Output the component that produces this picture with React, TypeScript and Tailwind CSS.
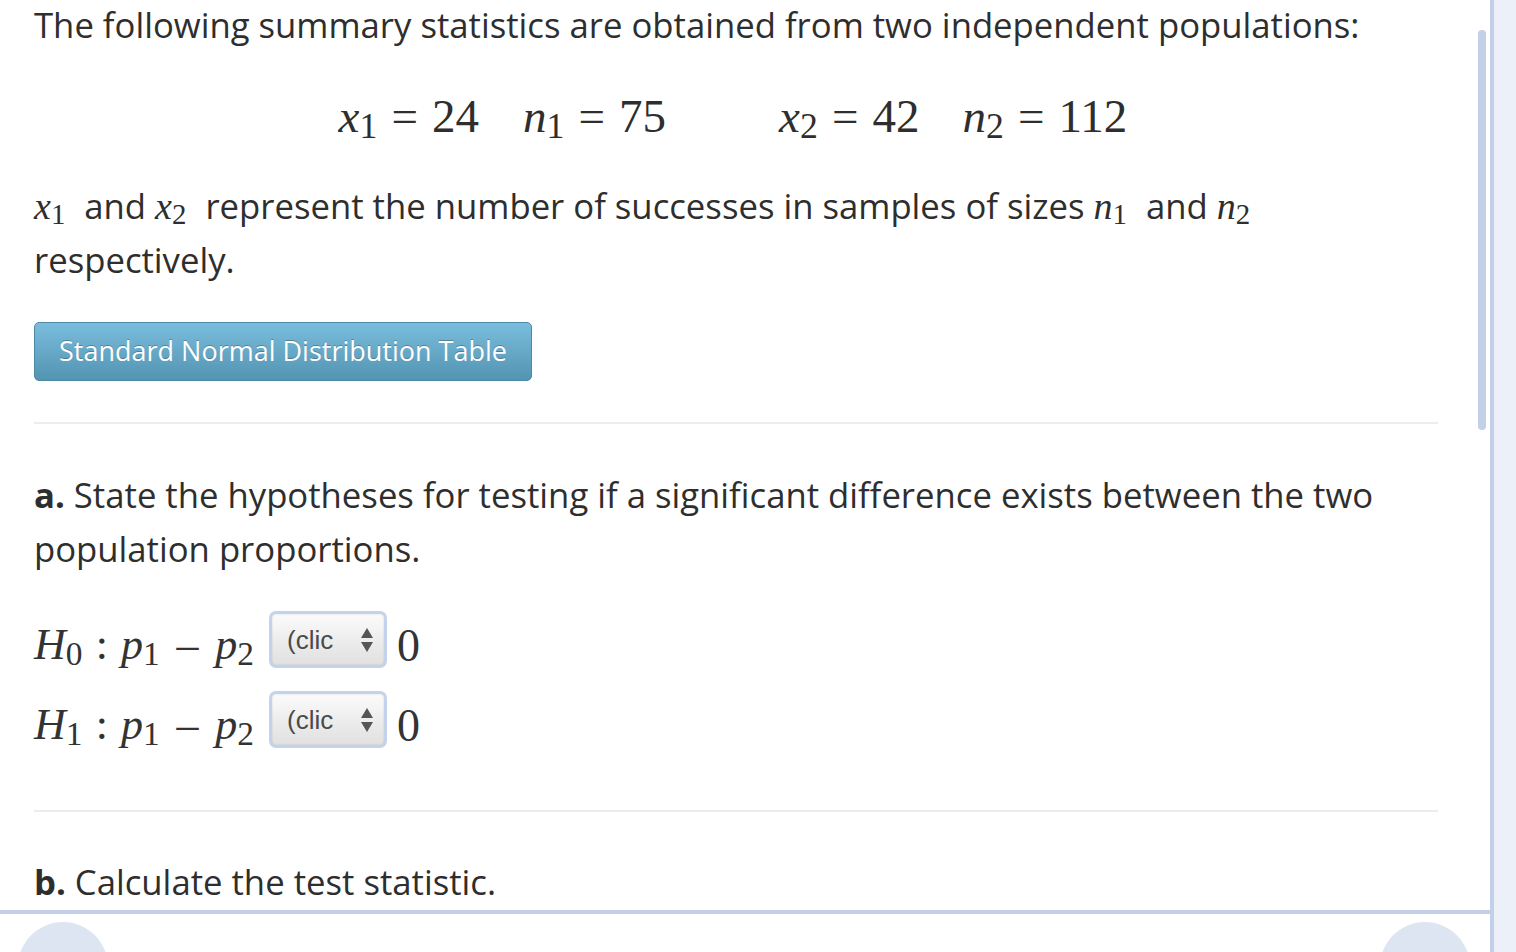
import React from "react";

const serif = "font-['Liberation_Serif','Times_New_Roman',serif]";

function Sub({ children }: { children: React.ReactNode }) {
  return (
    <span className="relative top-[0.17em] text-[0.76em] not-italic leading-none">{children}</span>
  );
}

function MVar({ v, s }: { v: string; s: string }) {
  return (
    <span className="leading-none">
      <i>{v}</i>
      <Sub>{s}</Sub>
    </span>
  );
}

function Eq({ v, s, n }: { v: string; s: string; n: string }) {
  return (
    <span className="whitespace-nowrap leading-none">
      <MVar v={v} s={s} />
      <span className="mx-[0.3em]">=</span>
      <span>{n}</span>
    </span>
  );
}

function Select() {
  return (
    <div className="h-[57px] w-[118px] rounded-[7px] border-[3px] border-[#c4d2ec] bg-[#c4d2ec]">
      <div className="flex h-full w-full items-center justify-between rounded-[4px] bg-gradient-to-b from-[#fbfbfb] to-[#e0e0e0] pl-[15px] pr-[10px] shadow-[inset_0_0_2px_rgba(0,0,0,0.15)]">
        <span className="font-['Liberation_Sans',Arial,sans-serif] text-[26px] leading-none text-[#4a4a4a]">(clic</span>
        <svg width="14" height="26" viewBox="0 0 14 26">
          <path d="M7 1 L13 11 L1 11 Z" fill="#555" />
          <path d="M7 25 L13 15 L1 15 Z" fill="#555" />
        </svg>
      </div>
    </div>
  );
}

function HRow({ h }: { h: string }) {
  return (
    <div className="flex h-[57px] items-start">
      <span className={`${serif} mt-[12px] whitespace-nowrap text-[44px] leading-none text-[#333]`}>
        <MVar v="H" s={h} />
        <span className="mx-[0.3em]">:</span>
        <MVar v="p" s="1" />
        <span className="mx-[0.38em]">–</span>
        <MVar v="p" s="2" />
      </span>
      <div className="ml-[15px]">
        <Select />
      </div>
      <span className={`${serif} ml-[10px] mt-[12px] text-[46px] leading-none text-[#333]`}>0</span>
    </div>
  );
}

function IM({ v, s }: { v: string; s: string }) {
  return (
    <span className={`${serif} pr-[10px] text-[38px] leading-none`}>
      <MVar v={v} s={s} />
    </span>
  );
}

export default function App() {
  return (
    <div className="flex h-[952px] w-[1516px] overflow-hidden bg-white font-['Open_Sans',sans-serif] text-[#2e2e2e]">
      <div className="flex w-[1490px] shrink-0 flex-col">
        <div className="relative h-[910px] shrink-0">
          <div className="w-[1438px] pl-[34px]">
            <p className="text-[34.7px] leading-[50px]">
              The following summary statistics are obtained from two independent populations:
            </p>
            <div className={`${serif} mt-[36px] flex h-[60px] items-center justify-center pr-[6px] text-[47px] leading-none`}>
              <Eq v="x" s="1" n="24" />
              <span className="ml-[44px]">
                <Eq v="n" s="1" n="75" />
              </span>
              <span className="ml-[113px]">
                <Eq v="x" s="2" n="42" />
              </span>
              <span className="ml-[43px]">
                <Eq v="n" s="2" n="112" />
              </span>
            </div>
            <p className="mt-[33px] text-[34.7px] leading-[54px]">
              <IM v="x" s="1" /> and <IM v="x" s="2" /> represent the number of successes in samples of sizes{" "}
              <IM v="n" s="1" /> and <IM v="n" s="2" />
              <br />
              respectively.
            </p>
            <button className="mt-[35px] flex h-[59px] w-[498px] items-center justify-center rounded-[5px] border border-[#4a89a8] bg-gradient-to-b from-[#7bbddc] to-[#5394b3] text-[27px] text-white [text-shadow:0_-1px_0_rgba(0,0,0,0.25)]">
              Standard Normal Distribution Table
            </button>
            <div className="mt-[41px] h-[2px] w-full bg-[#ededed]" />
            <p className="mt-[44px] text-[34.7px] leading-[54px]">
              <b>a.</b> State the hypotheses for testing if a significant difference exists between the two
              population proportions.
            </p>
            <div className="mt-[35px] flex flex-col gap-[23px]">
              <HRow h="0" />
              <HRow h="1" />
            </div>
            <div className="mt-[62px] h-[2px] w-full bg-[#ededed]" />
            <p className="mt-[43px] text-[34.7px] leading-[54px]">
              <b>b.</b> Calculate the test statistic.
            </p>
          </div>
          <div className="absolute right-[4px] top-[30px] h-[400px] w-[8px] rounded-full bg-[#c3d0e8]" />
        </div>
        <div className="h-[4px] shrink-0 bg-[#c3d0e8]" />
        <div className="flex shrink-0 justify-between pl-[18px] pr-[20px] pt-[8px]">
          <div className="h-[90px] w-[90px] shrink-0 rounded-full bg-[#dde4f2]" />
          <div className="h-[90px] w-[90px] shrink-0 rounded-full bg-[#dde4f2]" />
        </div>
      </div>
      <div className="w-[4px] shrink-0 bg-[#c3d0e8]" />
      <div className="flex-1 bg-[#ecf0f9]" />
    </div>
  );
}
